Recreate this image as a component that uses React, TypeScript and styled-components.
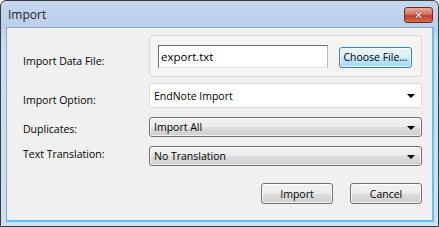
import React from 'react'
import styled, { createGlobalStyle } from 'styled-components'

const GlobalStyle = createGlobalStyle`
  html, body {
    margin: 0;
    padding: 0;
    background: #ffffff;
  }
  body {
    font-family: 'Open Sans', 'Liberation Sans', sans-serif;
    font-size: 10.5px;
    color: #000;
  }
`

const Window = styled.div`
  width: 437px;
  height: 225px;
  border: 1px solid #3c3c3c;
  border-radius: 6px 6px 0 0;
  background: linear-gradient(180deg, #c3d7ee 0%, #bad0ea 25px, #c9dcf1 40px, #cfe0f3 100%);
  display: flex;
  flex-direction: column;
  overflow: hidden;
`

const TitleBar = styled.div`
  height: 26px;
  flex: none;
  display: flex;
  align-items: center;
  justify-content: space-between;
  padding: 0 5px 0 7px;
`

const Title = styled.span`
  font-size: 12px;
  color: #1e1e1e;
`

const CloseButton = styled.div`
  width: 27px;
  height: 14px;
  margin-top: 2px;
  border: 1px solid #7a2a20;
  border-radius: 3px;
  background: linear-gradient(180deg, #e9a99c 0%, #d7735f 45%, #c0402a 55%, #d26a50 100%);
  display: flex;
  align-items: center;
  justify-content: center;
  color: #fff;
  font-family: 'DejaVu Sans', sans-serif;
  font-weight: bold;
  font-size: 11px;
  text-shadow: 0 0 1px #5a1a10, 0 0 1px #5a1a10;
`

const Frame = styled.div`
  flex: 1;
  padding: 0 4px 4px 5px;
  display: flex;
`

const Client = styled.div`
  flex: 1;
  background: #f0f0f0;
  border: 1px solid #8ea4bf;
  border-bottom: 2px solid #5ec4ee;
  border-right: 2px solid #5ec4ee;
  display: grid;
  grid-template-columns: 126px 1fr;
  grid-auto-rows: auto;
  padding: 7px 10px 0 16px;
  align-content: start;
`

const Label = styled.div<{ $offset: number }>`
  padding-top: ${(p) => p.$offset}px;
  line-height: 15px;
  white-space: nowrap;
`

const Cell = styled.div<{ $top: number }>`
  margin-top: ${(p) => p.$top}px;
  display: flex;
`

const FileGroup = styled.div`
  flex: 1;
  height: 42px;
  box-sizing: border-box;
  border: 1px solid #dadada;
  border-radius: 3px;
  background: #f4f4f4;
  display: flex;
  align-items: center;
  padding: 0 9px 0 8px;
  gap: 11px;
`

const TextBox = styled.div`
  width: 170px;
  height: 23px;
  box-sizing: border-box;
  border: 1px solid #6c6c6c;
  border-right-color: #b6b6b6;
  border-bottom-color: #e3e3e3;
  background: #fff;
  padding: 2px 2px;
  font-size: 11.5px;
  line-height: 17px;
`

const Button = styled.div<{ $focused?: boolean; $width: number }>`
  width: ${(p) => p.$width}px;
  height: 21px;
  box-sizing: border-box;
  border: 1px solid ${(p) => (p.$focused ? '#3c7fb1' : '#707070')};
  border-radius: 3px;
  background: ${(p) =>
    p.$focused
      ? 'linear-gradient(180deg, #eaf6fd 0%, #d9f0fc 50%, #bee6fd 51%, #a7d9f5 100%)'
      : 'linear-gradient(180deg, #f2f2f2 0%, #ebebeb 50%, #dddddd 51%, #cfcfcf 100%)'};
  box-shadow: inset 0 0 0 1px rgba(255, 255, 255, 0.7);
  display: flex;
  align-items: center;
  justify-content: center;
  white-space: nowrap;
  margin-top: ${(p) => (p.$focused ? 2 : 0)}px;
`

const Combo = styled.div<{ $flat?: boolean }>`
  flex: 1;
  box-sizing: border-box;
  height: ${(p) => (p.$flat ? 25 : 20)}px;
  border: 1px solid ${(p) => (p.$flat ? '#dcdcdc' : '#707070')};
  border-radius: 3px;
  background: ${(p) =>
    p.$flat
      ? '#ffffff'
      : 'linear-gradient(180deg, #f2f2f2 0%, #ebebeb 50%, #dddddd 51%, #cfcfcf 100%)'};
  box-shadow: ${(p) => (p.$flat ? 'none' : 'inset 0 0 0 1px rgba(255,255,255,0.7)')};
  display: flex;
  align-items: center;
  justify-content: space-between;
  padding: 0 6px 0 4px;
`

const Arrow = styled.span`
  width: 0;
  height: 0;
  border-left: 4px solid transparent;
  border-right: 4px solid transparent;
  border-top: 4px solid #000;
  margin-top: 1px;
`

const Footer = styled.div`
  grid-column: 1 / 3;
  margin-top: 17px;
  display: flex;
  justify-content: flex-end;
  gap: 17px;
`

export default function App() {
  return (
    <>
      <GlobalStyle />
      <Window>
        <TitleBar>
          <Title>Import</Title>
          <CloseButton>✕</CloseButton>
        </TitleBar>
        <Frame>
          <Client>
            <Label $offset={19}>Import Data File:</Label>
            <Cell $top={0}>
              <FileGroup>
                <TextBox>export.txt</TextBox>
                <Button $focused $width={73}>
                  Choose File...
                </Button>
              </FileGroup>
            </Cell>

            <Label $offset={16}>Import Option:</Label>
            <Cell $top={6}>
              <Combo $flat>
                <span>EndNote Import</span>
                <Arrow />
              </Combo>
            </Cell>

            <Label $offset={14}>Duplicates:</Label>
            <Cell $top={9}>
              <Combo>
                <span>Import All</span>
                <Arrow />
              </Combo>
            </Cell>

            <Label $offset={10}>Text Translation:</Label>
            <Cell $top={9}>
              <Combo>
                <span>No Translation</span>
                <Arrow />
              </Combo>
            </Cell>

            <Footer>
              <Button $width={72}>Import</Button>
              <Button $width={72}>Cancel</Button>
            </Footer>
          </Client>
        </Frame>
      </Window>
    </>
  )
}
